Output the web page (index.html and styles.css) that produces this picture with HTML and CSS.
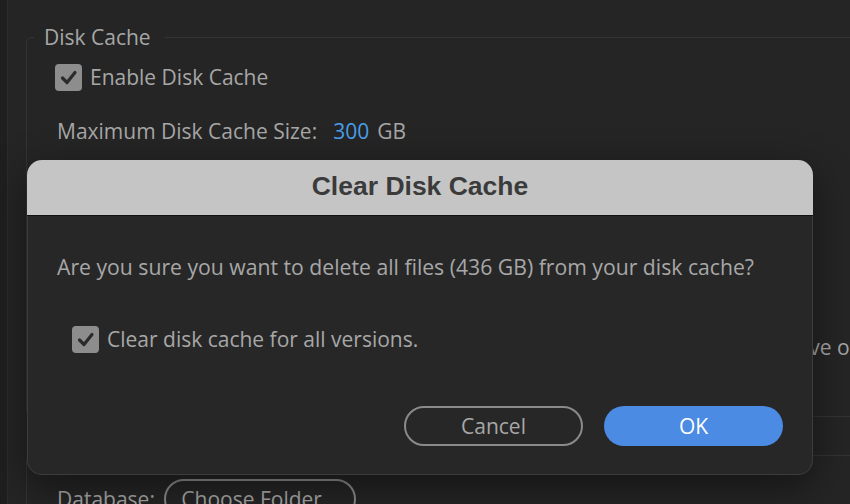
FILE: index.html
```html
<!DOCTYPE html>
<html lang="en">
<head>
<meta charset="utf-8">
<title>Preferences – Clear Disk Cache</title>
<link rel="stylesheet" href="styles.css">
</head>
<body>
<div class="app">
  <aside class="rail"></aside>
  <main class="prefs">
    <fieldset class="group group-cache">
      <legend class="legend">Disk Cache</legend>
      <label class="check">
        <span class="box"><svg viewBox="0 0 27 27" width="27" height="27"><path d="M7.5 14 L12 18.5 L20 8.5" fill="none" stroke="#2b2b2b" stroke-width="3.2" stroke-linecap="round" stroke-linejoin="round"/></svg></span>
        <span>Enable Disk Cache</span>
      </label>
      <div class="field">Maximum Disk Cache Size:<span class="val">300</span>GB</div>
      <div class="field hidden-row">Disk Cache Location:</div>
      <div class="field hidden-row">Purge Disk Cache</div>
      <div class="field split"><span>Clear disk cache files automatically</span><span class="side">Save on close</span></div>
    </fieldset>
    <fieldset class="group group-db">
      <legend class="legend">Media Cache</legend>
      <div class="field db-row">Database:<button class="btn-outline small">Choose Folder...</button></div>
    </fieldset>
  </main>
</div>

<div class="dialog" role="dialog" aria-labelledby="dlg-title">
  <header class="dialog-head"><h1 id="dlg-title">Clear Disk Cache</h1></header>
  <div class="dialog-body">
    <p class="msg">Are you sure you want to delete all files (436 GB) from your disk cache?</p>
    <label class="check check-dlg">
      <span class="box"><svg viewBox="0 0 27 27" width="27" height="27"><path d="M7.5 14 L12 18.5 L20 8.5" fill="none" stroke="#2b2b2b" stroke-width="3.2" stroke-linecap="round" stroke-linejoin="round"/></svg></span>
      <span>Clear disk cache for all versions.</span>
    </label>
    <div class="actions">
      <button class="btn-outline">Cancel</button>
      <button class="btn-primary">OK</button>
    </div>
  </div>
</div>
</body>
</html>
```

FILE: styles.css
```css
* { box-sizing: border-box; }

html, body {
  margin: 0;
  height: 100%;
}

body {
  background: #252525;
  font-family: "Open Sans", "Noto Sans", sans-serif;
  font-size: 21px;
  color: #a7a7a7;
  overflow: hidden;
}

.app {
  display: flex;
  height: 504px;
}

.rail {
  width: 8px;
  flex: none;
  background: #1f1f1f;
  border-right: 1px solid #2c2c2c;
}

.prefs {
  flex: 1;
  overflow: hidden;
  padding: 23px 0 0 18px;
}

.group {
  margin: 0 -60px 0 0;
  padding: 0 0 0 28px;
  border: 1px solid #343434;
  border-radius: 6px;
  min-width: 0;
}

.legend {
  margin-left: -21px;
  padding: 0 14px 0 10px;
  font-size: 21px;
  line-height: 28px;
}

.group-cache {
  height: 394px;
  padding-top: 13px;
}

.check {
  display: flex;
  align-items: center;
  gap: 8px;
  font-size: 21px;
  line-height: 27px;
}

.box {
  width: 27px;
  height: 27px;
  flex: none;
  background: #8d8d8d;
  border-radius: 4px;
  display: block;
}

.box svg { display: block; }

.field {
  margin-top: 28px;
  margin-left: 2px;
  font-size: 21px;
  line-height: 24px;
  display: flex;
  align-items: center;
  gap: 8px;
}

.val {
  color: #4a9ee9;
  margin-left: 8px;
}

.hidden-row { margin-top: 40px; }

.split {
  margin-top: 64px;
  gap: 0;
}

.split > span:first-child { width: 729px; flex: none; overflow: hidden; white-space: nowrap; }

.side { white-space: nowrap; }

.group-db {
  margin-top: 24px;
  padding-top: 2px;
  height: 100px;
}

.db-row { margin-top: 8px; gap: 9px; }

.btn-outline {
  font-family: inherit;
  font-size: 21px;
  color: #a7a7a7;
  background: transparent;
  border: 2px solid #8a8a8a;
  border-radius: 20px;
  height: 40px;
  padding: 0;
  width: 179px;
}

.btn-outline.small {
  width: 192px;
  height: 40px;
}

.dialog {
  position: absolute;
  left: 27px;
  top: 160px;
  width: 786px;
  height: 315px;
  display: flex;
  flex-direction: column;
  border-radius: 15px;
  box-shadow: 0 12px 40px rgba(0, 0, 0, 0.45);
}

.dialog-head {
  height: 56px;
  flex: none;
  background: #c5c5c5;
  border-radius: 15px 15px 0 0;
  border-bottom: 1px solid #111;
  display: flex;
  align-items: center;
  justify-content: center;
}

.dialog-head h1 {
  margin: 0;
  font-family: "Liberation Sans", Arial, sans-serif;
  font-weight: bold;
  font-size: 26.5px;
  color: #3b3b3b;
  padding-bottom: 2px;
}

.dialog-body {
  flex: 1;
  background: #272727;
  border: 1px solid #3c3c3c;
  border-top: none;
  border-radius: 0 0 15px 15px;
  padding: 37px 29px 28px 29px;
  display: flex;
  flex-direction: column;
}

.msg {
  margin: 0;
  font-size: 21.2px;
  line-height: 28px;
}

.check-dlg {
  margin-top: 45px;
  margin-left: 15px;
}

.actions {
  margin-top: auto;
  display: flex;
  justify-content: flex-end;
  gap: 21px;
}

.btn-primary {
  font-family: inherit;
  font-size: 21px;
  color: #ffffff;
  background: #4b8be3;
  border: none;
  border-radius: 20px;
  height: 40px;
  width: 179px;
  padding: 0;
}
```
